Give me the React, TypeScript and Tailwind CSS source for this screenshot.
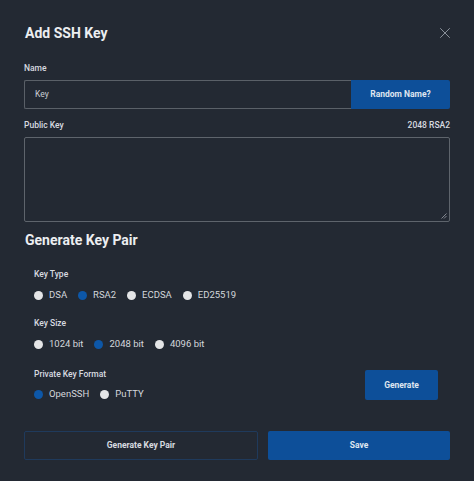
import { X } from "lucide-react";

function Radio({ label, checked }: { label: string; checked?: boolean }) {
  return (
    <label className="flex items-center gap-[6px] text-[9.5px] leading-[12px] text-[#d4d7dc]">
      <span
        className={
          checked
            ? "w-[9px] h-[9px] rounded-full bg-[#0d57a8]"
            : "w-[9px] h-[9px] rounded-full bg-[#e4e5e7]"
        }
      />
      {label}
    </label>
  );
}

function Label({ children, className }: { children: React.ReactNode; className?: string }) {
  return (
    <div className={"text-[8.5px] leading-[12px] font-medium text-[#d8dbe0] " + (className ?? "")}>
      {children}
    </div>
  );
}

export default function App() {
  return (
    <div
      className="w-[474px] h-[481px] bg-[#232933] text-[#e6e8eb] px-[24px] pt-[24px]"
      style={{ fontFamily: "Roboto, 'Noto Sans', sans-serif" }}
    >
      <div className="flex items-center justify-between h-[18px]">
        <h1 className="text-[14px] leading-[18px] font-bold text-[#eceef1] pl-[1px]">Add SSH Key</h1>
        <X className="w-[18px] h-[18px] text-[#8c939c] mr-[-4px]" strokeWidth={1.3} />
      </div>

      <Label className="mt-[20px]">Name</Label>
      <div className="mt-[6px] flex h-[29px]">
        <div className="flex-1 flex items-center border border-[#5a6068] border-r-0 rounded-l-[2px] px-[10px] text-[8.5px] text-[#c9cdd3]">
          Key
        </div>
        <button className="w-[99px] bg-[#0d4f99] text-[8.5px] font-bold text-[#dfe6f0] rounded-r-[2px]">
          Random Name?
        </button>
      </div>

      <div className="mt-[10px] flex justify-between">
        <Label>Public Key</Label>
        <Label>2048 RSA2</Label>
      </div>
      <div className="mt-[6px] h-[85px] border border-[#5e646c] rounded-[2px] flex items-end justify-end p-[2px]">
        <svg width="6" height="6" viewBox="0 0 6 6" className="text-[#9aa0a8]">
          <path d="M5.5 0.5 L0.5 5.5 M5.5 3 L3 5.5" stroke="currentColor" strokeWidth="0.8" />
        </svg>
      </div>

      <h2 className="mt-[9px] text-[14px] leading-[18px] font-bold text-[#eceef1] pl-[1px]">
        Generate Key Pair
      </h2>

      <div className="pl-[10px]">
        <Label className="mt-[19px]">Key Type</Label>
        <div className="mt-[9px] flex items-center gap-[11px]">
          <Radio label="DSA" />
          <Radio label="RSA2" checked />
          <Radio label="ECDSA" />
          <Radio label="ED25519" />
        </div>

        <Label className="mt-[16px]">Key Size</Label>
        <div className="mt-[9px] flex items-center gap-[11px]">
          <Radio label="1024 bit" />
          <Radio label="2048 bit" checked />
          <Radio label="4096 bit" />
        </div>

        <div className="mt-[18px] flex items-start justify-between pr-[12px]">
          <div>
            <Label>Private Key Format</Label>
            <div className="mt-[8px] flex items-center gap-[11px]">
              <Radio label="OpenSSH" checked />
              <Radio label="PuTTY" />
            </div>
          </div>
          <button className="mt-[2px] w-[73px] h-[30px] bg-[#0d4f99] text-[8.5px] font-bold text-[#dfe6f0] rounded-[2px]">
            Generate
          </button>
        </div>
      </div>

      <div className="mt-[31px] flex gap-[10px] h-[29px]">
        <button className="w-[234px] border border-[#1f3a5c] text-[8.5px] font-bold text-[#d8dbe0] rounded-[2px]">
          Generate Key Pair
        </button>
        <button className="flex-1 bg-[#0d4f99] text-[8.5px] font-bold text-[#dfe6f0] rounded-[2px]">
          Save
        </button>
      </div>
    </div>
  );
}
